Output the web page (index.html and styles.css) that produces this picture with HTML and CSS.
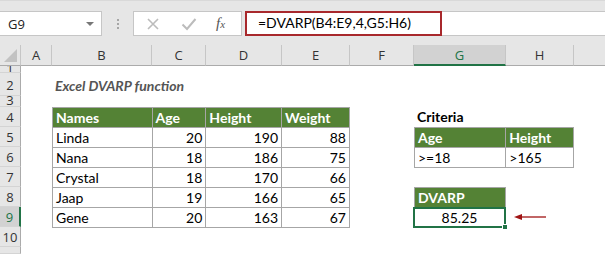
FILE: index.html
```html
<!DOCTYPE html>
<html lang="en">
<head>
    <meta charset="UTF-8">
    <title>Excel DVARP function</title>
    <link rel="stylesheet" href="styles.css">
</head>
<body>
    <div class="toolbar">
        <div class="name-box">
            <span>G9</span>
            <span class="caret"></span>
        </div>
        <div class="grip">
            <span></span><span></span><span></span>
        </div>
        <div class="fx-buttons">
            <svg class="btn-icon" width="14" height="14" viewBox="0 0 14 14">
                <path d="M2 2 L12 12 M12 2 L2 12" stroke="#bcbcbc" stroke-width="1.6" fill="none"/>
            </svg>
            <svg class="btn-icon" width="16" height="14" viewBox="0 0 16 14">
                <path d="M1.5 7.5 L6 12 L14.5 2" stroke="#bcbcbc" stroke-width="2" fill="none"/>
            </svg>
            <span class="fx">f<sub>x</sub></span>
        </div>
        <div class="formula-bar">
            <div class="formula-edit">=DVARP(B4:E9,4,G5:H6)</div>
        </div>
    </div>

    <div class="sheet">
        <div class="corner"><span class="corner-tri"></span></div>
        <div class="col-head">A</div>
        <div class="col-head">B</div>
        <div class="col-head">C</div>
        <div class="col-head">D</div>
        <div class="col-head">E</div>
        <div class="col-head">F</div>
        <div class="col-head active">G</div>
        <div class="col-head">H</div>
        <div class="col-head last"></div>

        <div class="row-head r1">1</div>
        <div class="row-head r2">2</div>
        <div class="row-head r3">3</div>
        <div class="row-head r4">4</div>
        <div class="row-head r5">5</div>
        <div class="row-head r6">6</div>
        <div class="row-head r7">7</div>
        <div class="row-head r8">8</div>
        <div class="row-head r9 active">9</div>
        <div class="row-head r10">10</div>
        <div class="row-head r11"></div>

        <div class="title">Excel DVARP function</div>

        <table class="data">
            <colgroup>
                <col style="width:100px"><col style="width:54px"><col style="width:76px"><col style="width:68px">
            </colgroup>
            <tr><th>Names</th><th>Age</th><th>Height</th><th>Weight</th></tr>
            <tr><td>Linda</td><td class="num">20</td><td class="num">190</td><td class="num">88</td></tr>
            <tr><td>Nana</td><td class="num">18</td><td class="num">186</td><td class="num">75</td></tr>
            <tr><td>Crystal</td><td class="num">18</td><td class="num">170</td><td class="num">66</td></tr>
            <tr><td>Jaap</td><td class="num">19</td><td class="num">166</td><td class="num">65</td></tr>
            <tr><td>Gene</td><td class="num">20</td><td class="num">163</td><td class="num">67</td></tr>
        </table>

        <div class="criteria-label">Criteria</div>

        <table class="criteria">
            <colgroup>
                <col style="width:92px"><col style="width:68px">
            </colgroup>
            <tr><th>Age</th><th>Height</th></tr>
            <tr><td>&gt;=18</td><td>&gt;165</td></tr>
        </table>

        <div class="result-head">DVARP</div>
        <div class="result">
            85.25
            <span class="fill-handle"></span>
        </div>
        <div class="pointer">
            <svg width="34" height="8" viewBox="0 0 34 8">
                <path d="M6 4 H32" stroke="#a01414" stroke-width="1.3"/>
                <path d="M0 4 L8 1 L8 7 Z" fill="#a01414"/>
            </svg>
        </div>
    </div>
</body>
</html>
```

FILE: styles.css
```css
* {
    box-sizing: border-box;
    margin: 0;
    padding: 0;
}

body {
    width: 605px;
    height: 254px;
    overflow: hidden;
    background-color: #ffffff;
    font-family: Lato, "Liberation Sans", sans-serif;
    font-size: 14px;
    color: #000;
}

/* formula bar area */
.toolbar {
    height: 45px;
    background-color: #e6e6e6;
    border-top: 1px solid #d9d9d9;
    display: flex;
    align-items: flex-start;
    padding-top: 10px;
}

.name-box {
    width: 102px;
    height: 25px;
    background-color: white;
    border: 1px solid #c6c6c6;
    border-left: none;
    display: flex;
    align-items: center;
    justify-content: space-between;
    padding: 0 7px 0 8px;
    font-family: "Open Sans", sans-serif;
    font-size: 13px;
    color: #222;
}

.caret {
    width: 0;
    height: 0;
    border-left: 4px solid transparent;
    border-right: 4px solid transparent;
    border-top: 4px solid #777;
}

.grip {
    width: 31px;
    height: 25px;
    display: flex;
    flex-direction: column;
    align-items: center;
    justify-content: center;
    gap: 2px;
}

.grip span {
    width: 2px;
    height: 2px;
    background-color: #a6a6a6;
}

.fx-buttons {
    width: 109px;
    height: 25px;
    background-color: white;
    border: 1px solid #c6c6c6;
    display: flex;
    align-items: center;
    padding-left: 12px;
    gap: 21px;
}

.fx {
    font-family: "Liberation Serif", serif;
    font-style: italic;
    font-size: 15px;
    color: #555;
    margin-left: -2px;
}

.fx sub {
    font-size: 11px;
    vertical-align: 0;
}

.formula-bar {
    flex: 1;
    height: 25px;
    margin-left: 3px;
    background-color: white;
    border-top: 1px solid #c6c6c6;
    border-bottom: 1px solid #c6c6c6;
}

.formula-edit {
    width: 197px;
    height: 25px;
    margin-top: -1px;
    border: 2px solid #a8282c;
    padding-left: 11px;
    line-height: 20px;
    font-size: 14px;
}

/* worksheet grid */
.sheet {
    display: grid;
    grid-template-columns: 21px 31px 100px 54px 76px 68px 64px 92px 68px 1fr;
    grid-template-rows: 21px 7px 23px 11px repeat(7, 20px) 1fr;
    height: 209px;
}

.corner {
    background-color: #e6e6e6;
    border-right: 1px solid #c6c6c6;
    border-bottom: 1px solid #ababab;
    position: relative;
}

.corner-tri {
    position: absolute;
    right: 3px;
    bottom: 3px;
    width: 0;
    height: 0;
    border-left: 13px solid transparent;
    border-bottom: 13px solid #c2c2c2;
}

.col-head {
    background-color: #e6e6e6;
    border-right: 1px solid #c6c6c6;
    border-bottom: 1px solid #ababab;
    text-align: center;
    font-family: "Open Sans", sans-serif;
    font-size: 13px;
    line-height: 20px;
    color: #333;
}

.col-head.last {
    border-right: none;
}

.col-head.active {
    background-color: #d2d2d2;
    border-bottom: 2px solid #217346;
    color: #217346;
}

.row-head {
    grid-column: 1;
    background-color: #e6e6e6;
    border-right: 1px solid #ababab;
    border-bottom: 1px solid #d4d4d4;
    text-align: center;
    font-family: "Open Sans", sans-serif;
    font-size: 13px;
    line-height: 20px;
    color: #333;
    overflow: hidden;
}

.row-head.r1 { line-height: 4px; }
.row-head.r2 { line-height: 24px; }
.row-head.r3 { line-height: 8px; }

.row-head.active {
    background-color: #d2d2d2;
    border-right: 2px solid #217346;
    color: #217346;
}

.title {
    grid-column: 3 / 7;
    grid-row: 3;
    padding: 3px 0 0 3px;
    font-weight: bold;
    font-style: italic;
    color: #555;
    line-height: 20px;
}

.data {
    grid-column: 3 / 7;
    grid-row: 5 / 11;
}

.data,
.criteria {
    border-collapse: collapse;
    table-layout: fixed;
}

.data th,
.data td,
.criteria th,
.criteria td {
    height: 20px;
    border: 1px solid #a6a6a6;
    padding: 0 3px;
    text-align: left;
    line-height: 18px;
}

.data th,
.criteria th {
    background-color: #548235;
    color: white;
    font-weight: bold;
}

.data .num {
    text-align: right;
}

.criteria-label {
    grid-column: 8;
    grid-row: 5;
    padding-left: 3px;
    font-weight: bold;
    line-height: 20px;
}

.criteria {
    grid-column: 8 / 10;
    grid-row: 6 / 8;
}

.result-head {
    grid-column: 8;
    grid-row: 9;
    background-color: #548235;
    border: 1px solid #a6a6a6;
    border-bottom: none;
    color: white;
    font-weight: bold;
    padding-left: 3px;
    line-height: 19px;
}

.result {
    grid-column: 8;
    grid-row: 10;
    border: 2px solid #217346;
    margin: 0 0 -1px -1px;
    text-align: center;
    line-height: 17px;
    position: relative;
}

.fill-handle {
    position: absolute;
    right: -4px;
    bottom: -4px;
    width: 6px;
    height: 6px;
    background-color: #217346;
    border: 1px solid white;
}

.pointer {
    grid-column: 9;
    grid-row: 10;
    display: flex;
    align-items: center;
    padding-left: 8px;
}
```
